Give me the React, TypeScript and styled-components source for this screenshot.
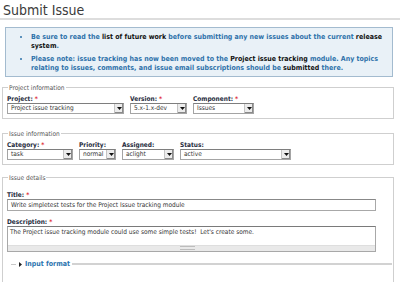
import React from "react";
import styled, { createGlobalStyle } from "styled-components";

const GlobalStyle = createGlobalStyle`
  body {
    margin: 0;
    background: #fff;
    font-family: "DejaVu Sans Condensed", "DejaVu Sans", sans-serif;
    font-stretch: condensed;
    color: #333;
  }
`;

type Field = { label: string; value: string; width: number; required?: boolean };

const projectFields: Field[] = [
  { label: "Project:", value: "Project issue tracking", width: 117, required: true },
  { label: "Version:", value: "5.x-1.x-dev", width: 57, required: true },
  { label: "Component:", value: "Issues", width: 61, required: true },
];

const issueFields: Field[] = [
  { label: "Category:", value: "task", width: 66, required: true },
  { label: "Priority:", value: "normal", width: 37 },
  { label: "Assigned:", value: "aclight", width: 52 },
  { label: "Status:", value: "active", width: 111 },
];

function DropArrow() {
  return (
    <svg width="5" height="3" viewBox="0 0 5 3">
      <path d="M0 0 L5 0 L2.5 3 Z" fill="#111" />
    </svg>
  );
}

function SelectField({ field }: { field: Field }) {
  return (
    <FieldItem>
      <Label>
        {field.label} {field.required ? <Req>*</Req> : null}
      </Label>
      <SelectBox $w={field.width}>
        <SelectText>{field.value}</SelectText>
        <ArrowBtn>
          <DropArrow />
        </ArrowBtn>
      </SelectBox>
    </FieldItem>
  );
}

export default function App() {
  return (
    <Page>
      <GlobalStyle />
      <PageTitle>Submit Issue</PageTitle>
      <Messages>
        <ul>
          <li>
            Be sure to read the <Dark>list of future work</Dark> before submitting any new
            issues about the current <Dark>release system</Dark>.
          </li>
          <li>
            Please note: issue tracking has now been moved to the{" "}
            <Dark>Project issue tracking</Dark> module. Any topics relating to issues,
            comments, and issue email subscriptions should be <Dark>submitted</Dark> there.
          </li>
        </ul>
      </Messages>

      <Fieldset $mt={7}>
        <Legend>Project information</Legend>
        <Row>
          {projectFields.map((f) => (
            <SelectField key={f.label} field={f} />
          ))}
        </Row>
      </Fieldset>

      <Fieldset $mt={11}>
        <Legend>Issue information</Legend>
        <Row>
          {issueFields.map((f) => (
            <SelectField key={f.label} field={f} />
          ))}
        </Row>
      </Fieldset>

      <Fieldset $mt={9}>
        <Legend>Issue details</Legend>
        <DetailItem $mt={9}>
          <Label>
            Title: <Req>*</Req>
          </Label>
          <TextInput>Write simpletest tests for the Project Issue tracking module</TextInput>
        </DetailItem>
        <DetailItem $mt={7}>
          <Label>
            Description: <Req>*</Req>
          </Label>
          <TextArea>
            <AreaText>
              The Project issue tracking module could use some simple tests!&nbsp; Let's
              create some.
            </AreaText>
            <Grippie>
              <Grip />
            </Grippie>
          </TextArea>
        </DetailItem>
        <Collapsed>
          <RuleStub />
          <Toggle>
            <svg width="3" height="5" viewBox="0 0 3 5">
              <path d="M0 0 L3 2.5 L0 5 Z" fill="#222" />
            </svg>
            Input format
          </Toggle>
          <Rule />
        </Collapsed>
      </Fieldset>
    </Page>
  );
}

const Page = styled.div`
  width: 400px;
  height: 282px;
  overflow: hidden;
`;

const PageTitle = styled.h2`
  margin: 0;
  padding: 2px 0 0 3px;
  font-size: 14px;
  line-height: 16px;
  font-weight: normal;
  color: #3a3a3a;
  border-bottom: 2px solid #dddddd;
`;

const Messages = styled.div`
  margin: 7px 7px 0 5px;
  border: 1px solid #a3bbcf;
  background: #e9f1f7;
  padding: 5px 6px 3px 0;
  ul {
    margin: 0;
    padding-left: 25px;
  }
  li {
    font-size: 7px;
    line-height: 9px;
    font-weight: bold;
    color: #2e72aa;
    margin-bottom: 3.5px;
  }
  li:last-child {
    margin-bottom: 0;
  }
`;

const Dark = styled.span`
  color: #111;
`;

const Fieldset = styled.fieldset<{ $mt: number }>`
  margin: ${(p) => p.$mt}px 6px 0 2px;
  padding: 0 4px 4px 4px;
  border: 1px solid #cfcfcf;
  min-width: 0;
`;

const Legend = styled.legend`
  font-size: 6.5px;
  line-height: 8px;
  color: #555;
  padding: 0 1px;
  margin-left: 1px;
`;

const Row = styled.div`
  display: flex;
  gap: 6px;
  margin-top: 3px;
`;

const FieldItem = styled.div`
  display: flex;
  flex-direction: column;
`;

const Label = styled.div`
  font-size: 6.5px;
  line-height: 8px;
  font-weight: bold;
  color: #1f2c3d;
`;

const Req = styled.span`
  color: #e0303a;
`;

const SelectBox = styled.div<{ $w: number }>`
  display: flex;
  align-items: center;
  box-sizing: border-box;
  width: ${(p) => p.$w}px;
  height: 11px;
  border: 1px solid #a4a4a4;
  border-top-color: #7e7e7e;
  background: #fff;
  padding-left: 3px;
`;

const SelectText = styled.span`
  font-size: 6.5px;
  color: #333;
  white-space: nowrap;
`;

const ArrowBtn = styled.span`
  display: flex;
  align-items: center;
  justify-content: center;
  margin-left: auto;
  width: 8px;
  height: 9px;
  background: #ececec;
  border-left: 1px solid #c4c4c4;
  box-shadow: inset -1px -1px 0 #8a8a8a;
`;

const DetailItem = styled.div<{ $mt: number }>`
  margin-top: ${(p) => p.$mt}px;
`;

const TextInput = styled.div`
  box-sizing: border-box;
  width: 369px;
  height: 12px;
  border: 1px solid #a8a8a8;
  border-top-color: #888;
  padding: 0 3px;
  font-size: 6.5px;
  line-height: 10px;
  color: #333;
  white-space: nowrap;
`;

const TextArea = styled.div`
  box-sizing: border-box;
  width: 369px;
  height: 26px;
  border: 1px solid #a8a8a8;
  border-top-color: #7a7a7a;
  display: flex;
  flex-direction: column;
`;

const AreaText = styled.div`
  flex: 1;
  padding: 1px 2px;
  font-size: 6.5px;
  line-height: 9px;
  color: #333;
  white-space: nowrap;
`;

const Grippie = styled.div`
  height: 5px;
  background: #e9e9e9;
  border-top: 1px solid #dedede;
  display: flex;
  justify-content: center;
  align-items: center;
`;

const Grip = styled.div`
  width: 15px;
  height: 2px;
  border-top: 1px solid #bdbdbd;
  border-bottom: 1px solid #bdbdbd;
  margin-left: -8px;
`;

const Collapsed = styled.div`
  display: flex;
  align-items: center;
  margin: 8px 0 10px 4px;
  width: 381px;
`;

const RuleStub = styled.div`
  width: 5px;
  height: 1px;
  background: #c8c8c8;
`;

const Toggle = styled.span`
  display: flex;
  align-items: center;
  gap: 3px;
  padding: 0 2px 0 3px;
  font-size: 7px;
  line-height: 9px;
  font-weight: bold;
  color: #2b73ae;
`;

const Rule = styled.div`
  flex: 1;
  height: 2px;
  background: #d2d2d2;
`;
